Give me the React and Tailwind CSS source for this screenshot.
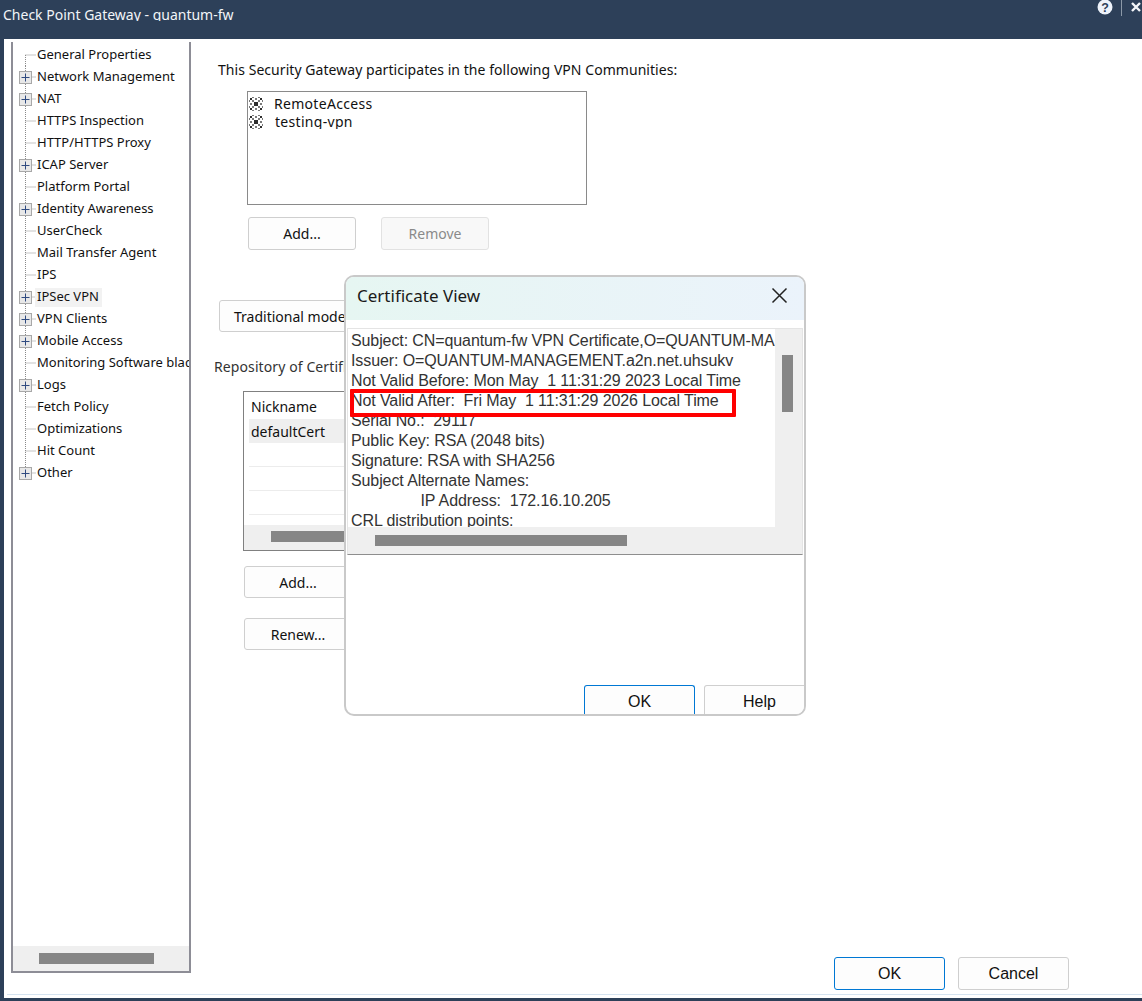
const UI = "font-['Noto_Sans',sans-serif]";

const tree = [
  ["General Properties", false],
  ["Network Management", true],
  ["NAT", true],
  ["HTTPS Inspection", false],
  ["HTTP/HTTPS Proxy", false],
  ["ICAP Server", true],
  ["Platform Portal", false],
  ["Identity Awareness", true],
  ["UserCheck", false],
  ["Mail Transfer Agent", false],
  ["IPS", false],
  ["IPSec VPN", true, true],
  ["VPN Clients", true],
  ["Mobile Access", true],
  ["Monitoring Software blades", false],
  ["Logs", true],
  ["Fetch Policy", false],
  ["Optimizations", false],
  ["Hit Count", false],
  ["Other", true],
];

const certLines = [
  "Subject: CN=quantum-fw VPN Certificate,O=QUANTUM-MANAGEMENT.a2n.net.uhsuky",
  "Issuer: O=QUANTUM-MANAGEMENT.a2n.net.uhsukv",
  "Not Valid Before: Mon May\u00a0 1 11:31:29 2023 Local Time",
  "Not Valid After:\u00a0 Fri May\u00a0 1 11:31:29 2026 Local Time",
  "Serial No.:\u00a0 29117",
  "Public Key: RSA (2048 bits)",
  "Signature: RSA with SHA256",
  "Subject Alternate Names:",
  "\u00a0\u00a0\u00a0\u00a0\u00a0\u00a0\u00a0\u00a0\u00a0\u00a0\u00a0\u00a0\u00a0\u00a0\u00a0\u00a0IP Address:\u00a0 172.16.10.205",
  "CRL distribution points:",
];

function TreeGlyph({ plus, last, first }) {
  return (
    <svg width="24" height="22" viewBox="0 0 24 22" className="shrink-0">
      <path
        d={`M12.5 ${first ? 11 : 0}V${last ? 11 : 22}M12.5 11H23`}
        stroke="#8a8a8a"
        strokeDasharray="1 1"
        fill="none"
      />
      {plus && (
        <g>
          <rect x="6.5" y="5.5" width="12" height="12" fill="#e8e8e8" stroke="#a8a8a8" />
          <path d="M8.5 11.5H16.5M12.5 7.5V15.5" stroke="#2f4a80" fill="none" />
        </g>
      )}
    </svg>
  );
}

function Btn({ className = "", children }) {
  return (
    <div className={`flex items-center justify-center rounded-[3px] border text-[14px] ${className}`}>
      {children}
    </div>
  );
}

const normal = "border-[#cfcfcf] bg-[#fdfdfd] text-[#111]";
const primary = "border-[#0078d4] bg-[#fdfdfd] text-[#111]";
const muted = "border-[#e2e2e2] bg-[#f8f8f8] text-[#8a8a8a]";
const arial = "font-['Liberation_Sans',sans-serif] !text-[16px]";

function Community() {
  const dark = [
    [5, 5, 4, 4],
    [1, 1, 2, 2], [11, 1, 2, 2], [1, 11, 2, 2], [11, 11, 2, 2],
  ];
  const soft = [
    [6, 1, 2, 2], [6, 11, 2, 2], [1, 6, 2, 2], [11, 6, 2, 2],
    [3, 3, 2, 2], [9, 3, 2, 2], [3, 9, 2, 2], [9, 9, 2, 2],
    [0, 3, 1, 2], [13, 3, 1, 2], [0, 9, 1, 2], [13, 9, 1, 2],
    [3, 0, 2, 1], [9, 0, 2, 1], [3, 13, 2, 1], [9, 13, 2, 1],
  ];
  return (
    <svg width="14" height="14" viewBox="0 0 14 14" className="shrink-0">
      {soft.map(([x, y, w, h], i) => (
        <rect key={i} x={x} y={y} width={w} height={h} fill="#7a7a7a" />
      ))}
      {dark.map(([x, y, w, h], i) => (
        <rect key={i} x={x} y={y} width={w} height={h} fill="#2e2e2e" />
      ))}
    </svg>
  );
}

function Scroll({ className = "", thumb }) {
  return (
    <div className={`bg-[#efefef] ${className}`}>
      <div className={`bg-[#868686] ${thumb}`} />
    </div>
  );
}

function Dialog() {
  return (
    <div className="absolute left-[344px] top-[275px] flex h-[441px] w-[462px] flex-col overflow-hidden rounded-[10px] border-2 border-[#c9c9c9] bg-white">
      <div className="flex h-[43px] shrink-0 items-start justify-between bg-gradient-to-r from-[#e6f6f2] to-[#ebf3fb] pl-[11px] pr-[16px] pt-[7px]">
        <span className={`${UI} text-[17px] leading-[24px] text-[#1a1a1a]`}>Certificate View</span>
        <svg width="17" height="17" viewBox="0 0 17 17" className="mt-[3px]">
          <path d="M1.5 1.5L15.5 15.5M15.5 1.5L1.5 15.5" stroke="#222" strokeWidth="1.5" fill="none" />
        </svg>
      </div>
      <div className="mx-[1px] mt-[8px] h-[227px] shrink-0 border border-[#e4e4e4] border-b-[#8e8e8e]">
        <div className="flex h-[198px]">
          <div className="relative w-[427px] overflow-hidden pl-[3px] pt-[2px] font-['Liberation_Sans',sans-serif] text-[16px] leading-[20px] text-[#333]">
            {certLines.map((l) => (
              <div key={l} className="whitespace-nowrap tracking-[-0.1px]">{l}</div>
            ))}
            <div className="absolute left-[2px] top-[60px] h-[28px] w-[386px] rounded-[1px] border-4 border-[#ff0000]" />
          </div>
          <Scroll className="flex-1 pl-[7px] pt-[26px]" thumb="h-[57px] w-[11px]" />
        </div>
        <Scroll className="h-[27px] pl-[27px] pt-[8px]" thumb="h-[11px] w-[252px]" />
      </div>
      <div className="mt-auto flex justify-end gap-[9px]">
        <Btn className={`h-[29px] w-[111px] rounded-b-none border-b-0 pt-[4px] ${primary} ${arial}`}>OK</Btn>
        <Btn className={`mr-[-11px] h-[29px] w-[111px] shrink-0 rounded-b-none border-b-0 pt-[4px] ${normal} ${arial}`}>Help</Btn>
      </div>
    </div>
  );
}

export default function App() {
  return (
    <div className={`${UI} relative h-[1001px] w-[1142px] overflow-hidden bg-[#2d4059] text-[13px] text-[#111]`}>
      <div className="flex h-[39px] items-start justify-between">
        <div className="ml-[3px] mt-[5px] h-[16px] overflow-hidden text-[14px] leading-[20px] text-[#f2f5f8]">
          Check Point Gateway - quantum-fw
        </div>
        <div className="flex items-start pr-[1px]">
          <svg width="18" height="18" viewBox="0 0 18 18" className="mr-[7px] mt-[-2px]">
            <circle cx="9" cy="9" r="7.5" fill="#eef3fb" />
            <text x="9" y="13.5" textAnchor="middle" fontSize="12.5" fontWeight="700" fill="#2d4059" fontFamily="Liberation Sans">?</text>
          </svg>
          <div className="mr-[9px] h-[16px] w-px bg-[#8c99a8]" />
          <svg width="10" height="10" viewBox="0 0 10 10" className="mt-[2px]">
            <path d="M1 1L9 9M9 1L1 9" stroke="#f4f6fa" strokeWidth="2.4" fill="none" />
          </svg>
        </div>
      </div>

      <div className="ml-[4px] h-[959px] bg-white">
        <div className="ml-[3px] flex h-[956px] border-b border-[#d5e3f0]">
          <div className="ml-[4px] mt-[3px] flex h-[931px] w-[180px] shrink-0 flex-col overflow-hidden border-x-2 border-b-2 border-[#8d8d96]">
            <div className="flex-1 pt-[2px]">
              {tree.map(([t, plus, sel], i) => (
                <div key={t} className="flex h-[22px] items-center">
                  <TreeGlyph plus={plus} first={i === 0} last={i === tree.length - 1} />
                  <span className={`whitespace-nowrap ${sel ? "ml-[-2px] flex h-[19px] w-[67px] items-center bg-[#f2f2f2] pl-[2px]" : ""}`}>{t}</span>
                </div>
              ))}
            </div>
            <Scroll className="h-[25px] pl-[26px] pt-[7px]" thumb="h-[11px] w-[115px]" />
          </div>

          <div className="flex min-w-0 flex-1 flex-col">
            <div className="flex-1">
              <div className="ml-[27px] mt-[21px] text-[14px] leading-[20px] tracking-[0.05px]">This Security Gateway participates in the following VPN Communities:</div>
              <div className="ml-[56px] mt-[11px] h-[114px] w-[340px] border border-[#8a8a8a] pl-[1px] pt-[3px] text-[14px]">
                <div className="flex h-[18px] items-center gap-[11px] leading-[18px] tracking-[0.3px]"><Community />RemoteAccess</div>
                <div className="flex h-[18px] items-center gap-[12px] leading-[18px] tracking-[0.3px]"><Community /><span className="h-[14px] overflow-hidden leading-[14px]">testing-vpn</span></div>
              </div>
              <div className="ml-[57px] mt-[12px] flex gap-[25px]">
                <Btn className={`h-[33px] w-[108px] ${normal}`}>Add...</Btn>
                <Btn className={`h-[33px] w-[108px] ${muted}`}>Remove</Btn>
              </div>
              <Btn className={`ml-[28px] mt-[50px] h-[32px] w-[130px] !justify-start overflow-hidden whitespace-nowrap pl-[14px] ${normal}`}>Traditional mode VPN</Btn>
              <div className="ml-[23px] mt-[24px] w-[133px] overflow-hidden whitespace-nowrap text-[14px] leading-[21px] tracking-[0.1px] text-[#333]">Repository of Certificates Available</div>
              <div className="ml-[52px] mt-[14px] flex h-[160px] w-[500px] flex-col border border-[#808080]">
                <div className="flex-1 pl-[5px]">
                  <div className="flex h-[27px] items-center pl-[2px] pt-[2px] text-[14px]">Nickname</div>
                  <div className="flex h-[24px] items-center bg-[#efefef] pl-[2px] text-[14px]">defaultCert</div>
                  <div className="h-[24px] border-b border-[#ececec]" />
                  <div className="h-[24px] border-b border-[#ececec]" />
                  <div className="h-[24px] border-b border-[#ececec]" />
                </div>
                <Scroll className="h-[25px] pl-[27px] pt-[6px]" thumb="h-[11px] w-[150px]" />
              </div>
              <Btn className={`ml-[53px] mt-[15px] h-[32px] w-[108px] ${normal}`}>Add...</Btn>
              <Btn className={`ml-[53px] mt-[20px] h-[32px] w-[108px] ${normal}`}>Renew...</Btn>
            </div>
            <div className="mb-[4px] flex justify-end gap-[13px] pr-[73px]">
              <Btn className={`h-[33px] w-[111px] ${primary} ${arial}`}>OK</Btn>
              <Btn className={`h-[33px] w-[111px] ${normal} ${arial}`}>Cancel</Btn>
            </div>
          </div>
        </div>
      </div>
      <Dialog />
    </div>
  );
}
